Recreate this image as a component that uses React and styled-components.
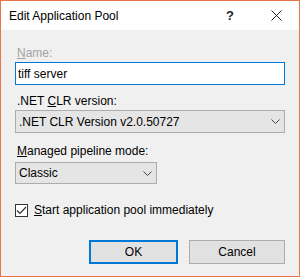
import styled, { createGlobalStyle } from 'styled-components';

const GlobalStyle = createGlobalStyle`
  html, body {
    margin: 0;
    padding: 0;
    background: #f0f0f0;
  }
  body {
    font-family: "Segoe UI", "Liberation Sans", Arial, sans-serif;
    font-size: 12px;
    color: #000;
  }
`;

const Window = styled.div`
  width: 300px;
  height: 277px;
  box-sizing: border-box;
  border: 1px solid #e9744a;
  background: #f0f0f0;
  display: flex;
  flex-direction: column;
`;

const TitleBar = styled.div`
  height: 29px;
  background: #fff;
  display: flex;
  align-items: center;
  padding-left: 8px;
`;

const Title = styled.div`
  flex: 1;
  font-size: 12px;
  line-height: 16px;
`;

const TitleButton = styled.div`
  width: 46px;
  height: 29px;
  display: flex;
  align-items: center;
  justify-content: center;
  font-size: 13px;
  font-weight: bold;
  color: #222;
`;

const Body = styled.div`
  padding: 15px 14px 0 14px;
  display: flex;
  flex-direction: column;
`;

const Field = styled.div`
  display: flex;
  flex-direction: column;
  margin-top: ${(p) => p.$top || 0}px;
`;

const Label = styled.div`
  line-height: 16px;
  padding-left: 2px;
  margin-bottom: ${(p) => p.$gap || 1}px;
  color: ${(p) => (p.$disabled ? '#a3a3a3' : '#000')};
`;

const TextInput = styled.div`
  height: 23px;
  box-sizing: border-box;
  border: 1px solid #0078d7;
  background: #fff;
  padding-left: 2px;
  display: flex;
  align-items: center;
`;

const Select = styled.div`
  width: ${(p) => p.$width}px;
  height: ${(p) => p.$height || 22}px;
  box-sizing: border-box;
  border: 1px solid #adadad;
  background: #e5e5e5;
  display: flex;
  align-items: center;
  justify-content: space-between;
  padding: 0 4px 0 3px;
`;

const CheckRow = styled.div`
  display: flex;
  align-items: center;
  gap: 6px;
  margin-top: 18px;
  line-height: 16px;
`;

const CheckBox = styled.div`
  width: 13px;
  height: 13px;
  box-sizing: border-box;
  border: 1px solid #333;
  background: #fff;
  display: flex;
  align-items: center;
  justify-content: center;
`;

const Buttons = styled.div`
  display: flex;
  justify-content: flex-end;
  gap: 11px;
  margin-top: 22px;
`;

const Button = styled.div`
  width: ${(p) => p.$width}px;
  height: 24px;
  box-sizing: border-box;
  border: ${(p) => (p.$primary ? '2px solid #0078d7' : '1px solid #adadad')};
  background: #e1e1e1;
  display: flex;
  align-items: center;
  justify-content: center;
`;

const Chevron = () => (
  <svg width="9" height="5" viewBox="0 0 9 5">
    <polyline points="0.5,0.5 4.5,4.5 8.5,0.5" fill="none" stroke="#444" strokeWidth="1" />
  </svg>
);

export default function App() {
  return (
    <>
      <GlobalStyle />
      <Window>
        <TitleBar>
          <Title>Edit Application Pool</Title>
          <TitleButton>?</TitleButton>
          <TitleButton>
            <svg width="11" height="11" viewBox="0 0 11 11">
              <path d="M0.5 0.5 L10.5 10.5 M10.5 0.5 L0.5 10.5" stroke="#222" strokeWidth="1" />
            </svg>
          </TitleButton>
        </TitleBar>
        <Body>
          <Field>
            <Label $disabled>
              <u>N</u>ame:
            </Label>
            <TextInput>tiff server</TextInput>
          </Field>
          <Field $top={8}>
            <Label>
              .NET <u>C</u>LR version:
            </Label>
            <Select $width={270} $height={23}>
              <span>.NET CLR Version v2.0.50727</span>
              <Chevron />
            </Select>
          </Field>
          <Field $top={10}>
            <Label $gap={3}>
              <u>M</u>anaged pipeline mode:
            </Label>
            <Select $width={142}>
              <span>Classic</span>
              <Chevron />
            </Select>
          </Field>
          <CheckRow>
            <CheckBox>
              <svg width="11" height="9" viewBox="0 0 11 9">
                <polyline points="1,4.5 4,7.5 10,1" fill="none" stroke="#333" strokeWidth="1.2" />
              </svg>
            </CheckBox>
            <span>
              <u>S</u>tart application pool immediately
            </span>
          </CheckRow>
          <Buttons>
            <Button $primary $width={89}>OK</Button>
            <Button $width={96}>Cancel</Button>
          </Buttons>
        </Body>
      </Window>
    </>
  );
}
